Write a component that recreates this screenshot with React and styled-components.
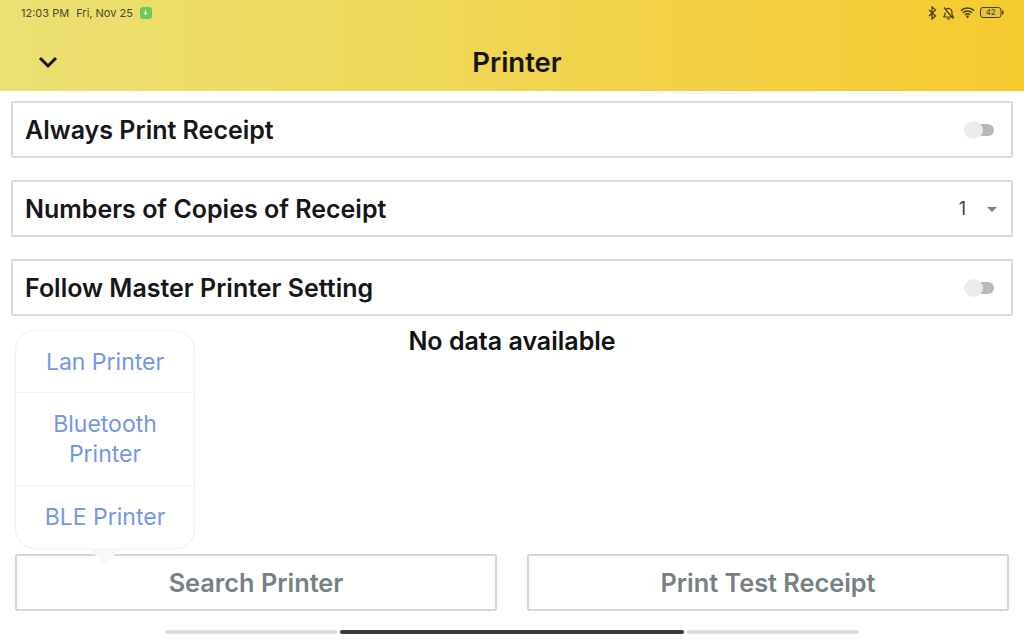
import React from 'react';
import styled, { createGlobalStyle } from 'styled-components';

const GlobalStyle = createGlobalStyle`
  html, body { margin: 0; padding: 0; background: #fff; }
  * { box-sizing: border-box; }
  body { font-family: "Inter", "Liberation Sans", sans-serif; }
`;

const Page = styled.div`
  position: relative;
  width: 1024px;
  height: 640px;
  overflow: hidden;
  display: flex;
  flex-direction: column;
  background: #fff;
`;

const Header = styled.header`
  height: 91px;
  flex-shrink: 0;
  padding: 5px 20px 0 21px;
  background: linear-gradient(90deg, #ebe074 0%, #eedb60 30%, #f3d044 70%, #f6cb30 100%);
`;

const StatusBar = styled.div`
  display: flex;
  align-items: center;
  justify-content: space-between;
  height: 15px;
  font-size: 11px;
  color: #4a4630;
`;

const StatusLeft = styled.div`
  display: flex;
  align-items: center;
  gap: 7px;
`;

const StatusRight = styled.div`
  display: flex;
  align-items: center;
  gap: 5px;
  color: #4a3f12;
`;

const GreenBadge = styled.span`
  width: 12px;
  height: 12px;
  border-radius: 3px;
  background: #6cc85a;
  display: flex;
  align-items: center;
  justify-content: center;
`;

const NavBar = styled.div`
  display: flex;
  align-items: center;
  height: 54px;
  margin-top: 15px;
  padding-left: 16px;
`;

const Title = styled.h1`
  flex: 1;
  margin: 0;
  padding-right: 29px;
  text-align: center;
  font-size: 27.5px;
  font-weight: 600;
  color: #15140c;
`;

const Content = styled.main`
  position: relative;
  flex: 1;
  display: flex;
  flex-direction: column;
  padding: 10px 11px 0 11px;
`;

const SettingList = styled.div`
  display: flex;
  flex-direction: column;
  gap: 22px;
`;

const SettingRow = styled.div`
  display: flex;
  align-items: center;
  justify-content: space-between;
  height: 57px;
  padding: 0 17px 0 12px;
  border: 2px solid #d9dcdf;
  border-radius: 2px;
`;

const RowLabel = styled.span`
  font-size: 25px;
  font-weight: 600;
  color: #15161a;
`;

const Toggle = styled.span`
  position: relative;
  width: 29px;
  height: 12px;
  border-radius: 6px;
  background: #b9b9b9;
  &::before {
    content: "";
    position: absolute;
    left: -1px;
    top: -3px;
    width: 19px;
    height: 18px;
    border-radius: 50%;
    background: #ececec;
  }
`;

const Select = styled.div`
  display: flex;
  align-items: center;
  gap: 21px;
  font-size: 18px;
  color: #3c3f42;
`;

const Caret = styled.span`
  width: 0;
  height: 0;
  margin-top: 2px;
  margin-right: -3px;
  border-left: 5px solid transparent;
  border-right: 5px solid transparent;
  border-top: 5px solid #7d8083;
`;

const EmptyText = styled.p`
  margin: 10px 0 0 0;
  text-align: center;
  font-size: 25px;
  line-height: 30px;
  font-weight: 600;
  color: #111;
`;

const Footer = styled.div`
  margin-top: auto;
  padding: 0 4px;
  display: grid;
  grid-template-columns: 482px 482px;
  justify-content: space-between;
`;

const FooterButton = styled.button`
  height: 57px;
  background: #fff;
  border: 2px solid #d5d7d9;
  border-radius: 2px;
  font-family: inherit;
  font-size: 25.3px;
  font-weight: 600;
  color: #778083;
`;

const HomeBar = styled.div`
  height: 29px;
  flex-shrink: 0;
  display: flex;
  justify-content: center;
  align-items: flex-start;
  gap: 3px;
  padding-top: 19px;
`;

const HomeSegment = styled.span`
  width: ${props => props.$wide ? '344px' : '172px'};
  height: 4px;
  border-radius: 2px;
  background: ${props => props.$wide ? '#3a3a3a' : '#dcdcdc'};
`;

const Popover = styled.div`
  position: absolute;
  left: 15px;
  top: 239px;
  width: 180px;
  background: #fff;
  border: 1px solid #eeeeee;
  border-radius: 20px;
  z-index: 2;
  &::after {
    content: "";
    position: absolute;
    left: 73px;
    bottom: -17px;
    width: 0;
    height: 0;
    border-left: 16px solid transparent;
    border-right: 16px solid transparent;
    border-top: 17px solid #f8f8f8;
  }
`;

const PopoverItem = styled.div`
  padding: ${props => props.$first ? '15.5px' : '16px'} 12px;
  text-align: center;
  font-size: 23px;
  line-height: 30px;
  color: #7397e6;
  border-top: ${props => props.$first ? 'none' : '1px solid #f2f2f2'};
`;

const App = () => {
  return (
    <Page>
      <GlobalStyle />
      <Header>
        <StatusBar>
          <StatusLeft>
            <span>12:03 PM</span>
            <span>Fri, Nov 25</span>
            <GreenBadge>
              <svg width="7" height="7" viewBox="0 0 8 8">
                <path d="M4 1v5M2 4l2 2 2-2" stroke="#eaf8e5" strokeWidth="1.2" fill="none" />
              </svg>
            </GreenBadge>
          </StatusLeft>
          <StatusRight>
            <svg width="9" height="14" viewBox="0 0 9 14">
              <path d="M1 4l6.5 6L4 13V1l3.500 3L1 10" stroke="currentColor" strokeWidth="1.3" fill="none" />
            </svg>
            <svg width="13" height="14" viewBox="0 0 13 14">
              <path d="M1.500 11h10l-1.500-2.200V6a3.500 3.500 0 0 0-6-2.500M3 6.500v2.300L1.500 11M5.200 12.800h2.600M2 1.500l9 11" stroke="currentColor" strokeWidth="1.2" fill="none" />
            </svg>
            <svg width="15" height="13" viewBox="0 0 16 13">
              <path d="M1 4.500a10 10 0 0 1 14 0M3.200 6.800a7 7 0 0 1 9.600 0M5.400 9a4 4 0 0 1 5.200 0" stroke="currentColor" strokeWidth="1.500" fill="none" />
              <circle cx="8" cy="11" r="1.300" fill="currentColor" />
            </svg>
            <svg width="24" height="11" viewBox="0 0 24 11">
              <rect x="0.5" y="0.5" width="20.5" height="10" rx="2.5" stroke="currentColor" fill="#e6c34a" />
              <rect x="22" y="3.5" width="1.5" height="4" rx="0.7" fill="currentColor" />
              <text x="10.7" y="8.3" textAnchor="middle" fontSize="8" fill="currentColor" fontFamily="Inter, sans-serif">42</text>
            </svg>
          </StatusRight>
        </StatusBar>
        <NavBar>
          <svg width="22" height="14" viewBox="0 0 22 14">
            <path d="M3 3l8 8 8-8" stroke="#15140c" strokeWidth="3" fill="none" />
          </svg>
          <Title>Printer</Title>
        </NavBar>
      </Header>
      <Content>
        <SettingList>
          <SettingRow>
            <RowLabel>Always Print Receipt</RowLabel>
            <Toggle />
          </SettingRow>
          <SettingRow>
            <RowLabel>Numbers of Copies of Receipt</RowLabel>
            <Select>
              <span>1</span>
              <Caret />
            </Select>
          </SettingRow>
          <SettingRow>
            <RowLabel>Follow Master Printer Setting</RowLabel>
            <Toggle />
          </SettingRow>
        </SettingList>
        <EmptyText>No data available</EmptyText>
        <Footer>
          <FooterButton>Search Printer</FooterButton>
          <FooterButton>Print Test Receipt</FooterButton>
        </Footer>
        <Popover>
          <PopoverItem $first>Lan Printer</PopoverItem>
          <PopoverItem>Bluetooth Printer</PopoverItem>
          <PopoverItem>BLE Printer</PopoverItem>
        </Popover>
      </Content>
      <HomeBar>
        <HomeSegment />
        <HomeSegment $wide />
        <HomeSegment />
      </HomeBar>
    </Page>
  );
};

export default App;
